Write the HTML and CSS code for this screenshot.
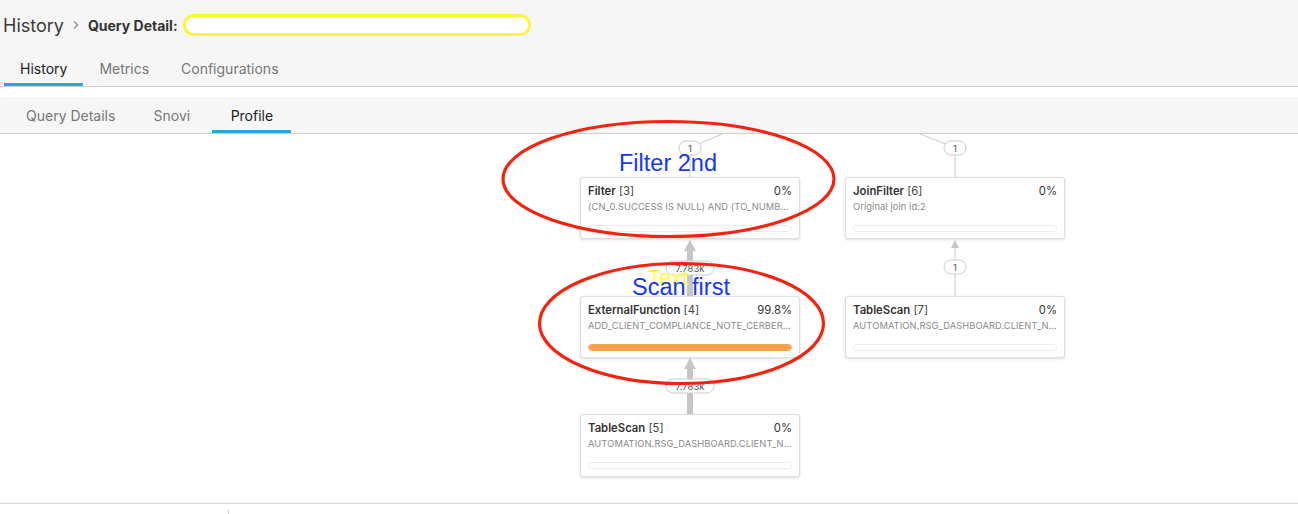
FILE: index.html
```html
<!DOCTYPE html>
<html>
<head>
<meta charset="utf-8">
<link rel="stylesheet" href="styles.css">
</head>
<body>
<div class="page">
  <header class="top">
    <div class="crumbs">
      <span class="crumb">History</span>
      <svg class="chev" width="8" height="10" viewBox="0 0 8 10"><path d="M2 1.5 L5.5 5 L2 8.5" fill="none" stroke="#999" stroke-width="1.6"/></svg>
      <span class="detail">Query Detail:</span>
      <span class="redact"></span>
    </div>
    <nav class="tabs">
      <a class="tab active">History</a>
      <a class="tab">Metrics</a>
      <a class="tab">Configurations</a>
    </nav>
  </header>
  <nav class="subbar">
    <a class="subtab">Query Details</a>
    <a class="subtab">Snovi</a>
    <a class="subtab active">Profile</a>
  </nav>
  <main class="canvas">
    <svg class="edges" width="1298" height="369" viewBox="0 0 1298 369">
      <g stroke="#c9c9c9" fill="none" stroke-width="1">
        <line x1="722" y1="0" x2="696" y2="11"/>
        <line x1="690" y1="21" x2="690" y2="43"/>
        <line x1="920" y1="0" x2="948" y2="11"/>
        <line x1="955" y1="21" x2="955" y2="43"/>
        <line x1="955" y1="112" x2="955" y2="162"/>
      </g>
      <g fill="#c6c6c6">
        <rect x="687" y="114" width="6" height="48"/>
        <polygon points="690,106 684,117 696,117"/>
        <rect x="687" y="232" width="6" height="48"/>
        <polygon points="690,224 684,235 696,235"/>
        <polygon points="955,106 951,114 959,114"/>
      </g>
      <g font-family="Inter, 'Liberation Sans', sans-serif" font-size="9.5" fill="#555" text-anchor="middle">
        <rect x="679" y="7" width="22" height="14" rx="7" fill="#fff" stroke="#ccc"/>
        <text x="690" y="17.5">1</text>
        <rect x="944" y="7" width="22" height="14" rx="7" fill="#fff" stroke="#ccc"/>
        <text x="955" y="17.5">1</text>
        <rect x="944" y="126" width="22" height="14" rx="7" fill="#fff" stroke="#ccc"/>
        <text x="955" y="136.5">1</text>
        <rect x="666" y="127" width="48" height="14" rx="7" fill="#fff" stroke="#ccc"/>
        <text x="690" y="137.5">7.783k</text>
        <rect x="666" y="245" width="48" height="14" rx="7" fill="#fff" stroke="#ccc"/>
        <text x="690" y="255.5">7.783k</text>
      </g>
    </svg>

    <div class="node n3">
      <div class="node-head"><span class="name"><b>Filter</b> [3]</span><span class="pct">0%</span></div>
      <div class="node-sub">(CN_0.SUCCESS IS NULL) AND (TO_NUMBER(CN_0.ID) IS NULL)</div>
      <div class="track"></div>
    </div>
    <div class="node n4">
      <div class="node-head"><span class="name"><b>ExternalFunction</b> [4]</span><span class="pct">99.8%</span></div>
      <div class="node-sub">ADD_CLIENT_COMPLIANCE_NOTE_CERBERUS_FUNCTION</div>
      <div class="track"><div class="fill" style="width:99.8%"></div></div>
    </div>
    <div class="node n5">
      <div class="node-head"><span class="name"><b>TableScan</b> [5]</span><span class="pct">0%</span></div>
      <div class="node-sub">AUTOMATION.RSG_DASHBOARD.CLIENT_NOTES</div>
      <div class="track"></div>
    </div>
    <div class="node n6">
      <div class="node-head"><span class="name"><b>JoinFilter</b> [6]</span><span class="pct">0%</span></div>
      <div class="node-sub">Original join id:2</div>
      <div class="track"></div>
    </div>
    <div class="node n7">
      <div class="node-head"><span class="name"><b>TableScan</b> [7]</span><span class="pct">0%</span></div>
      <div class="node-sub">AUTOMATION.RSG_DASHBOARD.CLIENT_NOTES</div>
      <div class="track"></div>
    </div>
  </main>
  <footer class="foot"><span class="tick"></span></footer>

  <svg class="annot" width="1298" height="514" viewBox="0 0 1298 514">
    <ellipse cx="668.5" cy="179" rx="165.5" ry="57.5" fill="none" stroke="#f5220f" stroke-width="3.2"/>
    <ellipse cx="681.5" cy="323.5" rx="142" ry="60" fill="none" stroke="#f5220f" stroke-width="3.2"/>
    <g font-family="'Liberation Sans', Arial, sans-serif">
      <text x="619" y="171" font-size="23.5" fill="#1436ff">Filter 2nd</text>
      <text x="648" y="285" font-size="22" fill="#ffff3a">Text</text>
      <text x="632" y="295" font-size="23.5" fill="#1436ff">Scan first</text>
    </g>
  </svg>
</div>
</body>
</html>
```

FILE: styles.css
```css
* { box-sizing: border-box; }
html, body { margin: 0; padding: 0; background: #fff; }
body { font-family: Inter, "Liberation Sans", sans-serif; color: #333; }
.page { position: relative; width: 1298px; height: 514px; overflow: hidden; }

.top { background: #f6f6f6; border-bottom: 1px solid #cfcfcf; }
.crumbs { height: 50px; display: flex; align-items: center; padding-left: 3px; }
.crumb { font-size: 18px; color: #3a3a3a; }
.chev { margin: 0 8px 0 8px; }
.detail { font-size: 14px; font-weight: 700; color: #333; }
.redact { display: inline-block; width: 348px; height: 22px; margin-left: 5px; border: 3px solid #fbf53c; border-radius: 11px; background: #fff; }

.tabs { display: flex; height: 36px; padding-left: 4px; gap: 0; }
.tab { display: flex; align-items: center; justify-content: center; min-width: 79px; padding: 3px 16px 0; font-size: 14px; color: #777; border-bottom: 3px solid transparent; }
.tab.active { color: #222; border-bottom-color: #27a6de; }

.subbar { display: flex; margin-top: 10px; height: 37px; background: #f6f6f6; border-bottom: 1px solid #cfcfcf; padding-left: 10px; gap: 1px; }
.subtab { display: flex; align-items: center; justify-content: center; min-width: 79px; padding: 3px 16px 0; font-size: 14px; color: #777; border-bottom: 3px solid transparent; }
.subtab.active { color: #222; border-bottom-color: #27a6de; }

.canvas { position: relative; height: 370px; border-bottom: 1px solid #d6d6d6; }
.edges { position: absolute; left: 0; top: 0; }

.node { position: absolute; width: 220px; height: 62px; background: #fff; border: 1px solid #dedede; border-radius: 3px; box-shadow: 0 1px 3px rgba(0,0,0,0.14); padding: 6px 7px 0 7px; }
.n3 { left: 580px; top: 43px; }
.n4 { left: 580px; top: 162px; }
.n5 { left: 580px; top: 280px; height: 63px; }
.n6 { left: 845px; top: 43px; }
.n7 { left: 845px; top: 162px; }
.node-head { display: flex; justify-content: space-between; font-size: 11.3px; line-height: 14px; color: #444; }
.node-head b { font-weight: 600; color: #333; }
.pct { color: #333; }
.node-sub { margin-top: 3px; font-size: 9.3px; letter-spacing: 0.1px; line-height: 12px; color: #8a8a8a; white-space: nowrap; overflow: hidden; text-overflow: ellipsis; }
.track { margin-top: 12px; height: 7px; border: 1px solid #ececec; border-radius: 4px; overflow: hidden; }
.fill { height: 100%; background: #f7a04a; border-radius: 2px; }
.n4 .track { border-color: #f7a04a; }

.foot { height: 10px; position: relative; }
.tick { position: absolute; left: 228px; top: 6px; width: 1px; height: 6px; background: #ccc; }

.annot { position: absolute; left: 0; top: 0; pointer-events: none; }
```
